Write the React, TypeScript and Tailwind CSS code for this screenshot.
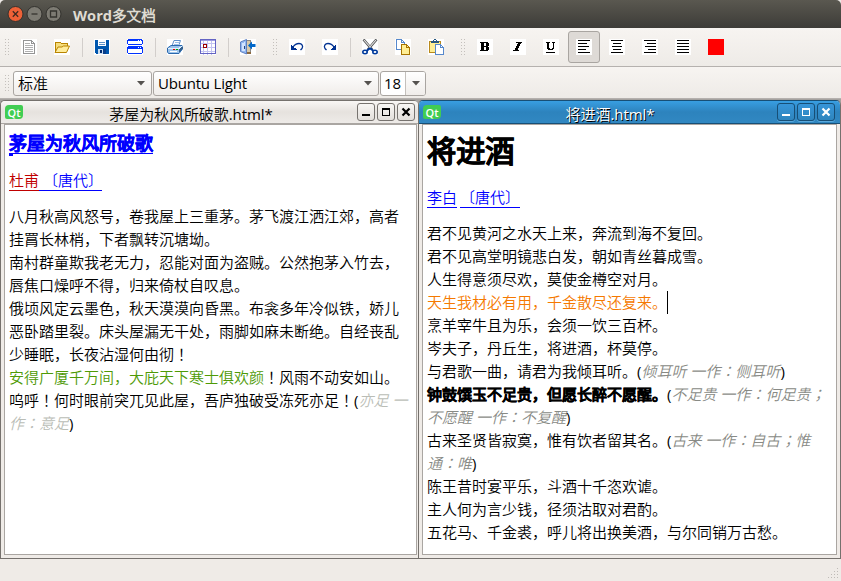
import type { ReactNode } from "react";

function Icon({ children }: { children: ReactNode }) {
  return (
    <svg width="16" height="16" viewBox="0 0 16 16" fill="none" shapeRendering="crispEdges" className="block bg-white">
      {children}
    </svg>
  );
}

const NewIcon = () => (
  <Icon>
    <path d="M2.5 1.5H10.5L13.5 4.5V14.5H2.5Z" stroke="#949494" />
    <path d="M10.5 1.5V4.5H13.5" stroke="#949494" />
    <path d="M4 4.5H9M4 6.5H12M4 8.5H12M4 10.5H12M4 12.5H12" stroke="#b0b0b0" />
  </Icon>
);

const OpenIcon = () => (
  <Icon>
    <path d="M1 13V4L2.500 3H6L7.500 4.500H13V7" fill="#f6dd7c" stroke="#b98400" />
    <path d="M1 13.500L4 8H8L9.500 7H15.500L12.500 13.500Z" fill="#ffed9c" stroke="#b98400" shapeRendering="auto" />
  </Icon>
);

const SaveIcon = () => (
  <Icon>
    <path d="M1 1H15V15H2L1 14Z" fill="#0057ae" />
    <path d="M4 1H12V7H4Z" fill="#fff" />
    <path d="M5 3.5H11M5 5.500H11" stroke="#5f93c8" />
    <path d="M4 10H12V15H4Z" fill="#c9dcf0" />
    <path d="M6 11H8V14H6Z" fill="#002c73" />
    <path d="M9 10H12V15H9Z" fill="#0b408b" />
  </Icon>
);

const SaveAllIcon = () => (
  <Icon>
    <path d="M1 0H15V1H16V5H15V6H1V5H0V1H1Z" fill="#0032ff" />
    <path d="M1 2H15V5H1Z" fill="#fff" />
    <path d="M1 7H15V8H16V14H15V15H1V14H0V8H1Z" fill="#0032ff" />
    <path d="M1 10H15V14H1Z" fill="#fff" />
    <path d="M11 1.500H12M13 1.500H14M11 8.500H12M13 8.500H14" stroke="#fff" />
  </Icon>
);

const PrintIcon = () => (
  <Icon>
    <path d="M5 7L7 1.500H13.500L11.500 7" fill="#fff" stroke="#5f8fc9" shapeRendering="auto" />
    <path d="M7.500 3.500H12M6.500 5.500H11" stroke="#9ec0e8" />
    <path d="M0.500 9L4 6.500H15L15.500 10L12 14.500H1.500L0.500 13Z" fill="#9cc4ec" stroke="#2a68ad" shapeRendering="auto" />
    <path d="M1 9.500H12L15 7" stroke="#e6f3ff" />
    <path d="M12 14L15.500 10V7.500L12.500 10Z" fill="#34618f" />
    <path d="M6 10.500H8" stroke="#e00000" />
    <path d="M9 10.500H11" stroke="#00a000" />
    <path d="M3 12.500H10" stroke="#fff" />
  </Icon>
);

const PreviewIcon = () => (
  <Icon>
    <path d="M0 4.500H16M0 8.500H16M0 12.500H16M3.500 0V16M7.500 0V16M11.500 0V16" stroke="#c3c3f2" />
    <path d="M0.500 0.500H15.500V14.500H0.500Z" stroke="#6464c3" />
    <path d="M1 1.500H15" stroke="#9c9ce1" />
    <path d="M3.500 5.500H6.500V8.500H3.500Z" fill="#fff" stroke="#9c0000" />
  </Icon>
);

const ExitIcon = () => (
  <Icon>
    <path d="M4 1.500H10.500V13.500H4Z" fill="#d9c9a9" stroke="#8a8784" />
    <path d="M0.500 3L6.500 0.500V15L0.500 12.500Z" fill="#94b9f1" stroke="#5f7fc0" shapeRendering="auto" />
    <path d="M2 4L5 3V12L2 11.500Z" fill="#d2e3ff" />
    <path d="M4.500 7V10" stroke="#26437c" />
    <path d="M8 6.500L12 2.500V5H15.500V8H12V10.500Z" fill="#0067c9" shapeRendering="auto" />
    <path d="M7 12.500H11V14.500H7Z" fill="#8b6940" />
  </Icon>
);

const UndoIcon = () => (
  <Icon>
    <path d="M4 8C6 5 8 4.500 10 4.500C13 4.500 14.500 7 13 9.500L11.500 11" stroke="#003191" strokeWidth="1.300" shapeRendering="auto" />
    <path d="M2 5V11H8L6 9L4.500 8Z" fill="#003191" />
  </Icon>
);

const RedoIcon = () => (
  <Icon>
    <path d="M12 8C10 5 8 4.500 6 4.500C3 4.500 1.500 7 3 9.500L4.500 11" stroke="#003191" strokeWidth="1.300" shapeRendering="auto" />
    <path d="M14 5V11H8L10 9L11.500 8Z" fill="#003191" />
  </Icon>
);

const CutIcon = () => (
  <Icon>
    <g shapeRendering="auto">
      <path d="M1.500 0.500L10 10.500M14.500 0.500L6 10.500" stroke="#555" strokeWidth="2.600" />
      <path d="M2 1L9 9M14 1L7 9" stroke="#e6e6e6" strokeWidth="1.100" />
      <path d="M8 9L4.500 12M8 9L11.500 12" stroke="#003a9c" strokeWidth="2" />
      <ellipse cx="3" cy="13" rx="2.200" ry="1.700" stroke="#003a9c" strokeWidth="1.600" />
      <ellipse cx="13" cy="13" rx="2.200" ry="1.700" stroke="#003a9c" strokeWidth="1.600" />
    </g>
  </Icon>
);

const CopyIcon = () => (
  <Icon>
    <path d="M1.500 0.500H6.500L9.500 3.500V10.500H1.500Z" fill="#fff" stroke="#5688cc" />
    <path d="M6.500 0.500V3.500H9.500" stroke="#5688cc" />
    <path d="M6.500 5.500H11.500L14.500 8.500V15.500H6.500Z" fill="#ffee94" stroke="#a87400" />
    <path d="M11.500 5.500V8.500H14.500" stroke="#a87400" />
  </Icon>
);

const PasteIcon = () => (
  <Icon>
    <path d="M1.500 2.500H12.500V13.500H1.500Z" fill="#ffee94" stroke="#b98a1c" />
    <path d="M3 4V2H5V1H6V0H8V1H9V2H11V4Z" fill="#27567f" />
    <path d="M6 1H8V2H6Z" fill="#fff" />
    <path d="M7.500 5.500H12.500L15.500 8.500V15.500H7.500Z" fill="#fff" stroke="#5688cc" />
    <path d="M12.500 5.500V8.500H15.500" stroke="#5688cc" />
  </Icon>
);

const BoldIcon = () => (
  <Icon>
    <path d="M3 3H11V4H12V7H11V8H12V11H11V12H3V11H4V4H3ZM7 4V7H9V4ZM7 8V11H9V8Z" fill="#000" fillRule="evenodd" />
  </Icon>
);

const ItalicIcon = () => (
  <Icon>
    <path d="M6 3H12V4H11V5H10V7H9V9H8V11H9V12H3V11H5V9H6V7H7V5H8V4H6Z" fill="#000" />
  </Icon>
);

const UnderlineIcon = () => (
  <Icon>
    <path d="M3 3H7V4H6V9H7V10H9V9H10V4H9V3H12V4H11V10H10V11H5V10H4V4H3ZM3 13H12V14H3Z" fill="#000" />
  </Icon>
);

const AlignLeftIcon = () => (
  <Icon>
    <path d="M2 1.500H14M2 4.500H11M2 7.500H13M2 10.500H10M2 13.500H14" stroke="#000" />
  </Icon>
);

const AlignCenterIcon = () => (
  <Icon>
    <path d="M2 1.500H14M4 4.500H12M3 7.500H13M4 10.500H12M2 13.500H14" stroke="#000" />
  </Icon>
);

const AlignRightIcon = () => (
  <Icon>
    <path d="M2 1.500H14M5 4.500H14M3 7.500H14M6 10.500H14M2 13.500H14" stroke="#000" />
  </Icon>
);

const JustifyIcon = () => (
  <Icon>
    <path d="M2 1.500H14M2 4.500H14M2 7.500H14M2 10.500H14M2 13.500H14" stroke="#000" />
  </Icon>
);

const ColorIcon = () => (
  <Icon>
    <path d="M0 0H16V16H0Z" fill="#f00" />
  </Icon>
);

function ToolButton({ children, active = false }: { children: ReactNode; active?: boolean }) {
  return (
    <button
      className={
        active
          ? "flex h-8 w-8 items-center justify-center rounded-[3px] border border-[#a9a5a1] bg-[#dedad6]"
          : "flex h-8 w-8 items-center justify-center"
      }
    >
      {children}
    </button>
  );
}

function Separator() {
  return (
    <div className="flex h-[19px] w-1.5 justify-center">
      <div className="w-px bg-[#d2cecb]" />
    </div>
  );
}

function Grip() {
  return (
    <svg width="5" height="17" viewBox="0 0 5 17" shapeRendering="crispEdges" fill="#c4c0bc">
      {[0, 3, 6, 9, 12, 15].map((y) => (
        <g key={y}>
          <rect x="0" y={y} width="1" height="1" />
          <rect x="3" y={y} width="1" height="1" />
        </g>
      ))}
    </svg>
  );
}

function Arrow() {
  return (
    <svg width="8" height="5" viewBox="0 0 8 5" fill="#55524f">
      <path d="M0 0H8L4 4.500Z" />
    </svg>
  );
}

type WindowProps = { title: string; active?: boolean; children: ReactNode };

function WindowButtons({ active }: { active: boolean }) {
  const box = active
    ? "flex h-[18px] w-[18px] items-center justify-center rounded-[3px] border border-[#174f76] bg-linear-to-b from-[#3795d8] to-[#2e85be] text-white shadow-[0_1px_0_#5aa9dc]"
    : "flex h-[18px] w-[18px] items-center justify-center rounded-[3px] border border-[#77736f] bg-linear-to-b from-[#f8f6f4] to-[#e3dfdb] text-black";
  return (
    <div className="flex gap-0.5">
      <div className={box}>
        <svg width="10" height="10" viewBox="0 0 10 10" shapeRendering="crispEdges">
          <path d="M1 8H9" stroke="currentColor" strokeWidth="2" />
        </svg>
      </div>
      <div className={box}>
        <svg width="10" height="10" viewBox="0 0 10 10" shapeRendering="crispEdges" fill="none">
          <path d="M1.500 1V8.500H8.500V1" stroke="currentColor" />
          <path d="M1 2H9" stroke="currentColor" strokeWidth="2" />
        </svg>
      </div>
      <div className={box}>
        <svg width="10" height="10" viewBox="0 0 10 10">
          <path d="M1.500 1.500L8.500 8.500M8.500 1.500L1.500 8.500" stroke="currentColor" strokeWidth="2.200" />
        </svg>
      </div>
    </div>
  );
}

function DocWindow({ title, active = false, children }: WindowProps) {
  return (
    <section
      className={
        active
          ? "flex h-[459px] w-[423px] flex-col rounded-t-[5px] border border-[#75716d] border-t-[#174f76] bg-[#efebe7]"
          : "flex h-[459px] w-[418px] flex-col rounded-t-[5px] border border-r-0 border-[#75716d] bg-[#efebe7]"
      }
    >
      <header
        className={
          active
            ? "flex h-[23px] shrink-0 items-center rounded-t-[4px] border-b border-[#174f76] bg-linear-to-b from-[#389ee2] via-[#2d83bd] to-[#3188c2] pr-[5px] pl-[4px] text-white [text-shadow:1px_1px_0_#000]"
            : "flex h-[23px] shrink-0 items-center rounded-t-[4px] border-b border-[#aaa6a2] bg-linear-to-b from-[#f9f7f5] via-[#e6e2de] to-[#eeebe8] pr-[3px] pl-[4px] text-black"
        }
      >
        <span className="flex h-[14px] w-[18px] items-center justify-center rounded-[2px] rounded-tl-[4px] rounded-br-[4px] bg-[#41cd52] text-[11px] leading-none font-semibold text-white [text-shadow:none]">
          Qt
        </span>
        <h2 className="flex-1 pt-[3px] pl-[2px] text-center text-[15px] leading-5 font-normal tracking-[-0.07px]">{title}</h2>
        <WindowButtons active={active} />
      </header>
      <div
        className={
          active
            ? "mx-[3px] mb-[3px] flex-1 border border-[#aaa6a2] bg-white px-1 whitespace-nowrap"
            : "mr-px mb-[3px] ml-[3px] flex-1 border border-[#aaa6a2] bg-white px-1 whitespace-nowrap"
        }
      >
        {children}
      </div>
    </section>
  );
}

// full width punctuation that sits in the middle of its cell
function P({ children }: { children: ReactNode }) {
  return <span className="font-['Noto_Sans_CJK_JP_DemiLight','Noto_Sans_CJK_JP',sans-serif] leading-none">{children}</span>;
}

function Line({ children }: { children: ReactNode }) {
  return <p className="h-[23px] text-[15px] leading-[23px]">{children}</p>;
}

export default function App() {
  return (
    <div className="flex h-[581px] w-[841px] flex-col overflow-hidden bg-[#efebe7] font-['Open_Sans','Noto_Sans_CJK_SC_DemiLight','Noto_Sans_CJK_SC_Light','Noto_Sans_CJK_SC',sans-serif] text-black">
      <header className="flex h-7 shrink-0 items-center rounded-t-[5px] bg-linear-to-b from-[#5a5850] to-[#3d3c38] pl-[7px]">
        <svg width="56" height="18" viewBox="0 0 56 18" fill="none">
          <circle cx="8.500" cy="9" r="7.500" fill="#ee6137" stroke="#33322e" />
          <path d="M5.800 6.300L11.200 11.700M11.200 6.300L5.800 11.700" stroke="#3f2a20" strokeWidth="1.300" />
          <circle cx="27.500" cy="9" r="7.500" fill="#7d7b73" stroke="#33322e" />
          <path d="M24.500 9H30.500" stroke="#35342f" strokeWidth="1.300" />
          <circle cx="46.500" cy="9" r="7.500" fill="#7d7b73" stroke="#33322e" />
          <path d="M43.500 6H49.500V12H43.500Z" stroke="#35342f" strokeWidth="1.300" />
        </svg>
        <h1 className="pt-[2px] pl-[10px] text-[14.6px] leading-5 font-bold text-[#dfdbd2]">Word多文档</h1>
      </header>

      <nav className="flex h-[39px] shrink-0 items-center gap-px border-b border-[#b5b1ae] bg-linear-to-b from-[#f7f4f1] to-[#eeebe7]">
        <div className="w-3 pl-[5px]">
          <Grip />
        </div>
        <ToolButton><NewIcon /></ToolButton>
        <ToolButton><OpenIcon /></ToolButton>
        <Separator />
        <ToolButton><SaveIcon /></ToolButton>
        <ToolButton><SaveAllIcon /></ToolButton>
        <Separator />
        <ToolButton><PrintIcon /></ToolButton>
        <ToolButton><PreviewIcon /></ToolButton>
        <Separator />
        <ToolButton><ExitIcon /></ToolButton>
        <div className="w-[15px] pl-2">
          <Grip />
        </div>
        <ToolButton><UndoIcon /></ToolButton>
        <ToolButton><RedoIcon /></ToolButton>
        <Separator />
        <ToolButton><CutIcon /></ToolButton>
        <ToolButton><CopyIcon /></ToolButton>
        <ToolButton><PasteIcon /></ToolButton>
        <div className="w-[15px] pl-2">
          <Grip />
        </div>
        <ToolButton><BoldIcon /></ToolButton>
        <ToolButton><ItalicIcon /></ToolButton>
        <ToolButton><UnderlineIcon /></ToolButton>
        <ToolButton active><AlignLeftIcon /></ToolButton>
        <ToolButton><AlignCenterIcon /></ToolButton>
        <ToolButton><AlignRightIcon /></ToolButton>
        <ToolButton><JustifyIcon /></ToolButton>
        <ToolButton><ColorIcon /></ToolButton>
      </nav>

      <nav className="flex h-8 shrink-0 items-center gap-px border-b border-[#b5b1ae] bg-linear-to-b from-[#f7f4f1] to-[#eeebe7] pt-px text-[15px]">
        <div className="w-3 pl-[5px]">
          <Grip />
        </div>
        <div className="flex h-[25px] w-[139px] items-center justify-between rounded-[3px] border border-[#a9a5a1] bg-linear-to-b from-white to-[#f0edea] pr-1.5 pl-1">
          标准
          <Arrow />
        </div>
        <div className="flex h-[25px] w-[226px] items-center justify-between rounded-[3px] border border-[#a9a5a1] bg-linear-to-b from-white to-[#f0edea] pr-1.5 pl-1 tracking-[-0.2px]">
          Ubuntu Light
          <Arrow />
        </div>
        <div className="flex h-[25px] w-[46px] items-stretch overflow-hidden rounded-[3px] border border-[#a9a5a1] bg-white">
          <span className="flex w-[25px] items-center border-r border-[#c4c0bc] pl-[3px]">18</span>
          <span className="flex flex-1 items-center justify-center bg-linear-to-b from-white to-[#f0edea]">
            <Arrow />
          </span>
        </div>
      </nav>

      <main className="flex h-[460px] shrink-0 bg-[#a5a29f] pt-px">
        <DocWindow title="茅屋为秋风所破歌.html*">
          <h3 className="pt-[5px] text-[18px] leading-[26px] font-bold text-[#0000ff] [-webkit-text-stroke:0.5px_#0000ff]">
            <span className="relative inline-block h-[24px] border-b border-[#0000ff] after:absolute after:top-[24px] after:left-0 after:h-0.5 after:w-1 after:bg-[#0000ff]">
              茅屋为秋风所破歌
            </span>
          </h3>
          <div className="flex pt-[14px] text-[15px] leading-[21px]">
            <span className="h-[21px] border-b border-[#c00000] text-[#c00000]">杜甫</span>
            <span className="h-[21px] w-[63px] border-b border-[#0000ff] pl-1 text-[#0000ff]">〔唐代〕</span>
          </div>
          <div className="pt-[14px]">
            <Line>八月秋高风怒号，卷我屋上三重茅。茅飞渡江洒江郊，高者</Line>
            <Line>挂罥长林梢，下者飘转沉塘坳。</Line>
            <Line>南村群童欺我老无力，忍能对面为盗贼。公然抱茅入竹去，</Line>
            <Line>唇焦口燥呼不得，归来倚杖自叹息。</Line>
            <Line>俄顷风定云墨色，秋天漠漠向昏黑。布衾多年冷似铁，娇儿</Line>
            <Line>恶卧踏里裂。床头屋漏无干处，雨脚如麻未断绝。自经丧乱</Line>
            <Line>少睡眠，长夜沾湿何由彻<P>！</P></Line>
            <Line>
              <span className="text-[#4e9a06]">安得广厦千万间，大庇天下寒士俱欢颜</span><P>！</P>风雨不动安如山。
            </Line>
            <Line>
              呜呼<P>！</P>何时眼前突兀见此屋，吾庐独破受冻死亦足<P>！</P>(<i className="text-[#babdb6]">亦足 一</i>
            </Line>
            <Line>
              <i className="text-[#babdb6]">作<P>：</P>意足</i>)
            </Line>
          </div>
        </DocWindow>

        <DocWindow title="将进酒.html*" active>
          <h3 className="pt-[5px] text-[29.200px] leading-[42px] font-bold [-webkit-text-stroke:0.7px_#000]">将进酒</h3>
          <div className="flex gap-[3px] pt-[15px] text-[15px] leading-[21px] text-[#0000ff]">
            <span className="h-[21px] border-b border-[#0000ff]">李白</span>
            <span className="h-[21px] border-b border-[#0000ff]">〔唐代〕</span>
          </div>
          <div className="pt-[14px]">
            <Line>君不见黄河之水天上来，奔流到海不复回。</Line>
            <Line>君不见高堂明镜悲白发，朝如青丝暮成雪。</Line>
            <Line>人生得意须尽欢，莫使金樽空对月。</Line>
            <Line>
              <span className="inline-block h-[23px] border-r border-black text-[#f57900]">天生我材必有用，千金散尽还复来。</span>
            </Line>
            <Line>烹羊宰牛且为乐，会须一饮三百杯。</Line>
            <Line>岑夫子，丹丘生，将进酒，杯莫停。</Line>
            <Line>
              与君歌一曲，请君为我倾耳听。(<i className="text-[#888a85]">倾耳听 一作<P>：</P>侧耳听</i>)
            </Line>
            <Line>
              <b className="[-webkit-text-stroke:0.5px_#000]">钟鼓馔玉不足贵，但愿长醉不愿醒。</b>(<i className="text-[#888a85]">不足贵 一作<P>：</P>何足贵<P>；</P></i>
            </Line>
            <Line>
              <i className="text-[#888a85]">不愿醒 一作<P>：</P>不复醒</i>)
            </Line>
            <Line>
              古来圣贤皆寂寞，惟有饮者留其名。(<i className="text-[#888a85]">古来 一作<P>：</P>自古<P>；</P>惟</i>
            </Line>
            <Line>
              <i className="text-[#888a85]">通<P>：</P>唯</i>)
            </Line>
            <Line>陈王昔时宴平乐，斗酒十千恣欢谑。</Line>
            <Line>主人何为言少钱，径须沽取对君酌。</Line>
            <Line>五花马、千金裘，呼儿将出换美酒，与尔同销万古愁。</Line>
          </div>
        </DocWindow>
      </main>

      <footer className="flex flex-1 items-end justify-end pr-0.5 pb-0.5">
        <svg width="11" height="11" viewBox="0 0 11 11" shapeRendering="crispEdges" fill="#bfbbb7">
          <path d="M9 0h1v1h-1zM6 3h1v1h-1zM9 3h1v1h-1zM3 6h1v1h-1zM6 6h1v1h-1zM9 6h1v1h-1zM0 9h1v1h-1zM3 9h1v1h-1zM6 9h1v1h-1zM9 9h1v1h-1z" />
        </svg>
      </footer>
    </div>
  );
}
